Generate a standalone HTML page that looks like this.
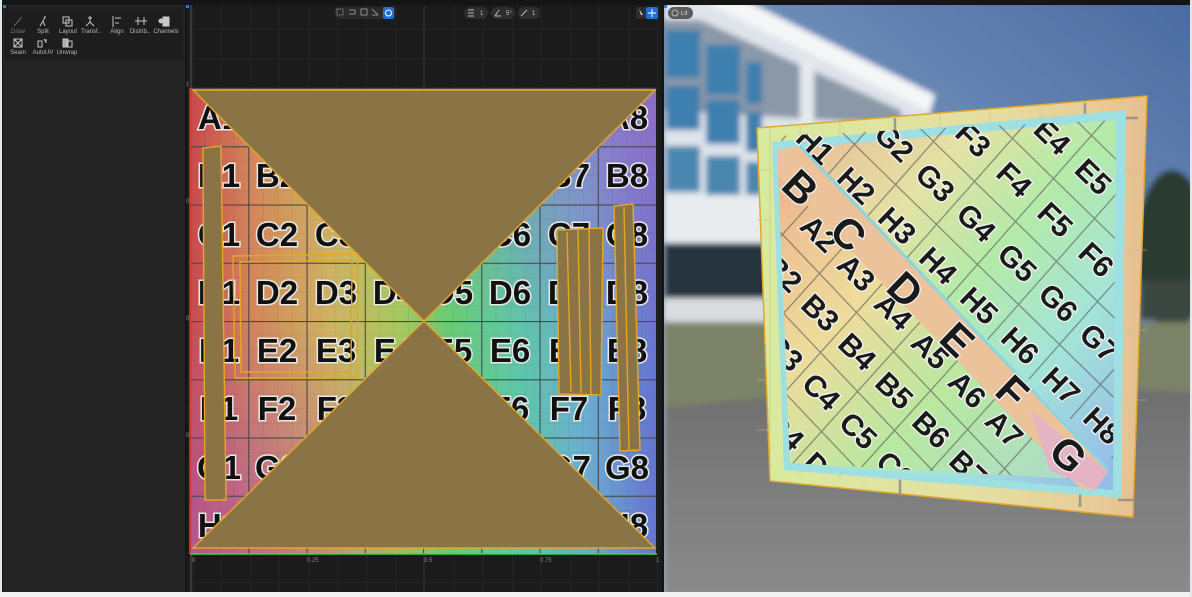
<!DOCTYPE html>
<html><head><meta charset="utf-8"><style>
html,body{margin:0;padding:0;background:#f2f2f2;width:1192px;height:597px;overflow:hidden}
svg{position:absolute;left:0;top:0;display:block}
.tb{font-family:"Liberation Sans",sans-serif;font-size:6px;fill:#b8b8b8;text-anchor:middle}
.uv{font-family:"Liberation Sans Narrow","Liberation Sans",sans-serif;font-weight:bold;font-size:33px;fill:#111;stroke:#e8e8e8;stroke-width:3;paint-order:stroke;text-anchor:middle}
.vl{font-family:"Liberation Sans Narrow","Liberation Sans",sans-serif;font-weight:bold;font-size:30px;fill:#1a1a1a;stroke:#f4f4f4;stroke-width:2.5;paint-order:stroke;text-anchor:middle}
.sl{font-family:"Liberation Sans Narrow","Liberation Sans",sans-serif;font-weight:bold;font-size:42px;fill:#1a1a1a;stroke:#f4f4f4;stroke-width:2.5;paint-order:stroke;text-anchor:middle}
.ax{font-family:"Liberation Sans",sans-serif;font-size:6px;fill:#888}
</style></head><body>
<svg width="1192" height="597" viewBox="0 0 1192 597">
<defs>
<linearGradient id="uvx" x1="0" y1="0" x2="1" y2="0">
<stop offset="0" stop-color="#c94a4c"/><stop offset=".14" stop-color="#d3895a"/><stop offset=".3" stop-color="#cfb262"/><stop offset=".45" stop-color="#a6c862"/><stop offset=".55" stop-color="#6ccb72"/><stop offset=".7" stop-color="#5fc6a8"/><stop offset=".85" stop-color="#6aaed0"/><stop offset="1" stop-color="#6674d0"/>
</linearGradient>
<radialGradient id="tr" cx="1" cy="0" r=".6"><stop offset="0" stop-color="#9c6cc4" stop-opacity=".8"/><stop offset="1" stop-color="#9c6cc4" stop-opacity="0"/></radialGradient>
<radialGradient id="bl" cx="0" cy="1" r=".55"><stop offset="0" stop-color="#b05aa8" stop-opacity=".8"/><stop offset="1" stop-color="#b05aa8" stop-opacity="0"/></radialGradient>
<pattern id="minor" x="190" y="88" width="14.5625" height="14.5625" patternUnits="userSpaceOnUse"><path d="M0 0H14.56M0 0V14.56" stroke="#000" stroke-opacity=".12" stroke-width=".8" fill="none"/></pattern>
<pattern id="major" x="190" y="88" width="58.25" height="58.25" patternUnits="userSpaceOnUse"><path d="M0 0H58.25M0 0V58.25" stroke="#4a4a4a" stroke-width="2.2" fill="none"/></pattern>
<pattern id="bggrid" x="192" y="0" width="29.1" height="29.1" patternUnits="userSpaceOnUse"><path d="M0 0H29.1M0 0V29.1" stroke="#2c2c2c" stroke-width="1" fill="none"/></pattern>
<linearGradient id="sky" x1="1" y1="0" x2="0.3" y2="1"><stop offset="0" stop-color="#4a6aa0"/><stop offset=".6" stop-color="#7e9cc4"/><stop offset="1" stop-color="#a8bcd4"/></linearGradient>
<linearGradient id="floor" x1="0" y1="0" x2="0" y2="1"><stop offset="0" stop-color="#6e6e6e"/><stop offset=".5" stop-color="#7e7e7e"/><stop offset="1" stop-color="#8a8a8a"/></linearGradient>
<filter id="blur"><feGaussianBlur stdDeviation="3"/></filter>
<clipPath id="vp"><rect x="664" y="5" width="526" height="587"/></clipPath>
<linearGradient id="frame" x1="0" y1="0" x2="1" y2="0"><stop offset="0" stop-color="#d8eaa0"/><stop offset=".6" stop-color="#e6dea0"/><stop offset=".85" stop-color="#e8cc98"/><stop offset="1" stop-color="#e6bf90"/></linearGradient>
<linearGradient id="tex" x1="0" y1="0" x2="1" y2="1"><stop offset="0" stop-color="#eab494"/><stop offset=".3" stop-color="#e4e2a4"/><stop offset=".5" stop-color="#b4eaa8"/><stop offset=".72" stop-color="#a4e4d8"/><stop offset="1" stop-color="#94b8ec"/></linearGradient>
<linearGradient id="texL" x1="0" y1="0" x2="1" y2="1"><stop offset="0" stop-color="#eeac8a"/><stop offset=".35" stop-color="#eedc9c"/><stop offset=".6" stop-color="#b8e8a0"/><stop offset="1" stop-color="#a8d8d8"/></linearGradient>
<clipPath id="rR"><polygon points="776,136 1116,120 1113,460"/></clipPath>
<clipPath id="rL"><polygon points="778,170 1075,480 1060,478 790,463"/></clipPath>
</defs>

<rect x="0" y="0" width="1192" height="592" fill="#151515"/>
<rect x="0" y="0" width="2" height="597" fill="#e6e6e6"/>
<rect x="3" y="5" width="182" height="587" fill="#242424"/>
<rect x="5" y="9" width="178" height="51" fill="#1d1d1d"/>
<rect x="3" y="5" width="3" height="3" fill="#2a7de1"/>
<g stroke="#c8c8c8" stroke-width="1" fill="none">
<path d="M14 26 L22 17" stroke="#666"/>
<path d="M40 26 l3-5 l2 5 M43 21 l2-4 M44 17 h2"/>
<rect x="63" y="17" width="6" height="6"/><rect x="66" y="20" width="6" height="6"/>
<path d="M90 16 v6 l-4 4 M90 22 l4 4 M88 18 h4"/>
<path d="M113 16 v11 M115 18 h6 M115 23 h4"/>
<path d="M135 21 h12 M138 17 v8 M144 17 v8"/>
<rect x="163" y="17" width="6" height="9" fill="#c8c8c8"/><circle cx="161" cy="21" r="2" fill="#c8c8c8"/>
<rect x="14" y="39" width="8" height="8"/><path d="M14 39 l8 8 M22 39 l-8 8"/>
<rect x="38" y="41" width="4" height="6"/><path d="M44 39 l2 3 M46 39 v4"/>
<rect x="63" y="39" width="5" height="8" fill="#aaa"/><rect x="67" y="41" width="5" height="6"/>
</g>
<text class="tb" x="18" y="33" style="fill:#777">Draw</text>
<text class="tb" x="43" y="33">Split</text>
<text class="tb" x="68" y="33">Layout</text>
<text class="tb" x="91" y="33">Transf..</text>
<text class="tb" x="117" y="33">Align</text>
<text class="tb" x="140" y="33">Distrib..</text>
<text class="tb" x="166" y="33">Channels</text>
<text class="tb" x="18" y="54">Seam</text>
<text class="tb" x="43" y="54">AutoUV</text>
<text class="tb" x="67" y="54">Unwrap</text>

<rect x="187" y="5" width="475" height="587" fill="#1b1b1b"/>
<rect x="187" y="5" width="475" height="587" fill="url(#bggrid)"/>
<rect x="186" y="5" width="3" height="3" fill="#2a7de1"/>
<line x1="424" y1="5" x2="424" y2="592" stroke="#333" />
<line x1="191" y1="5" x2="191" y2="592" stroke="#555"/>
<rect x="334" y="7" width="62" height="12" rx="6" fill="#2a2a2a"/>
<g fill="none" stroke="#aaa" stroke-width=".8"><rect x="337" y="9" width="6" height="6" stroke-dasharray="1.5 1"/><path d="M349 10 h6 v4 h-6"/><rect x="361" y="9" width="6" height="6"/><path d="M372 9 l6 6 M372 15 h6"/></g>
<rect x="383" y="7" width="11" height="12" rx="2" fill="#1f6fd6"/><circle cx="388.5" cy="13" r="3" fill="none" stroke="#fff" stroke-width="1"/>
<rect x="464" y="7" width="24" height="12" rx="6" fill="#2e2e2e"/><path d="M468 10h6M468 13h6M468 16h6" stroke="#bbb"/><text class="ax" x="480" y="15" style="fill:#ccc">1</text>
<rect x="491" y="7" width="24" height="12" rx="6" fill="#2e2e2e"/><path d="M495 16 l4-6 M495 16 h6" stroke="#bbb" fill="none"/><text class="ax" x="506" y="15" style="fill:#ccc">5°</text>
<rect x="518" y="7" width="22" height="12" rx="6" fill="#2e2e2e"/><path d="M521 16 l6-6" stroke="#bbb"/><text class="ax" x="532" y="15" style="fill:#ccc">1</text>
<rect x="636" y="7" width="10" height="12" rx="2" fill="#2e2e2e"/><path d="M639 9 l4 6 l-2 0z" fill="#ddd"/>
<rect x="646" y="7" width="12" height="12" rx="2" fill="#1f6fd6"/><path d="M652 9v8M648 13h8" stroke="#fff"/>

<rect x="190" y="88" width="466" height="466" fill="url(#uvx)"/>
<rect x="190" y="88" width="466" height="466" fill="url(#tr)"/>
<rect x="190" y="88" width="466" height="466" fill="url(#bl)"/>
<rect x="190" y="88" width="466" height="466" fill="url(#minor)"/>
<rect x="190" y="88" width="466" height="466" fill="url(#major)"/>
<g class="uv">
<text x="219" y="129">A1</text><text x="627" y="129">A8</text>
<text x="219" y="187">B1</text><text x="277" y="187">B2</text><text x="569" y="187">B7</text><text x="627" y="187">B8</text>
<text x="219" y="246">C1</text><text x="277" y="246">C2</text><text x="336" y="246">C3</text><text x="510" y="246">C6</text><text x="569" y="246">C7</text><text x="627" y="246">C8</text>
<text x="219" y="304">D1</text><text x="277" y="304">D2</text><text x="336" y="304">D3</text><text x="394" y="304">D4</text><text x="452" y="304">D5</text><text x="510" y="304">D6</text><text x="569" y="304">D7</text><text x="627" y="304">D8</text>
<text x="219" y="362">E1</text><text x="277" y="362">E2</text><text x="336" y="362">E3</text><text x="394" y="362">E4</text><text x="452" y="362">E5</text><text x="510" y="362">E6</text><text x="569" y="362">E7</text><text x="627" y="362">E8</text>
<text x="219" y="420">F1</text><text x="277" y="420">F2</text><text x="336" y="420">F3</text><text x="510" y="420">F6</text><text x="569" y="420">F7</text><text x="627" y="420">F8</text>
<text x="219" y="479">G1</text><text x="277" y="479">G2</text><text x="569" y="479">G7</text><text x="627" y="479">G8</text>
<text x="219" y="537">H1</text><text x="627" y="537">H8</text>
</g>
<g fill="#8a7446" stroke="#e6a622" stroke-width="1.4">
<polygon points="193,90 655,90 424,321"/>
<polygon points="424,321 655,548 193,548"/>
<polygon points="203,148 221,146 226,500 205,500"/>
<polygon points="614,206 633,204 640,450 620,451"/>
<polygon points="557,230 603,228 601,395 559,394"/>
</g>
<g fill="none" stroke="#e6a622" stroke-width="1.4">
<polygon points="233,256 358,254 357,378 235,378"/><polygon points="240,262 352,260 351,372 241,372"/>
<path d="M567 232 l4 160 M578 230 l3 163 M589 229 l2 165 M624 207 l5 243"/>
</g>
<line x1="190" y1="88" x2="190" y2="554" stroke="#ff3030" stroke-width="1.5"/>
<line x1="190" y1="554" x2="657" y2="554" stroke="#33e033" stroke-width="1.5"/>
<text class="ax" x="192" y="562">0</text><text class="ax" x="307" y="562">0.25</text><text class="ax" x="424" y="562">0.5</text><text class="ax" x="540" y="562">0.75</text><text class="ax" x="656" y="562">1</text>
<text class="ax" x="186" y="86">1</text><text class="ax" x="186" y="203">0</text><text class="ax" x="186" y="320">0</text><text class="ax" x="186" y="437">0</text>

<g clip-path="url(#vp)">
<g filter="url(#blur)">
<rect x="660" y="0" width="540" height="600" fill="url(#sky)"/>
<polygon points="664,0 700,0 930,100 930,330 664,330" fill="#dfe4ea"/>
<polygon points="664,20 700,20 900,110 905,125 664,110" fill="#8a98a8"/>
<polygon points="700,0 745,0 935,95 930,112" fill="#f4f6f8"/>
<rect x="666" y="30" width="34" height="48" fill="#3d7fae"/><rect x="706" y="45" width="34" height="50" fill="#3d7fae"/><rect x="746" y="62" width="16" height="42" fill="#3d7fae"/>
<rect x="666" y="86" width="34" height="44" fill="#3d7fae"/><rect x="706" y="100" width="34" height="44" fill="#3d7fae"/><rect x="746" y="112" width="16" height="40" fill="#3d7fae"/>
<rect x="666" y="146" width="34" height="46" fill="#4a86b0"/><rect x="706" y="156" width="34" height="42" fill="#4a86b0"/><rect x="746" y="162" width="16" height="40" fill="#4a86b0"/>
<rect x="800" y="60" width="14" height="240" fill="#e6eaee"/>
<rect x="664" y="195" width="266" height="48" fill="#e8ecef"/>
<rect x="664" y="243" width="266" height="55" fill="#28363c"/>
<rect x="664" y="298" width="266" height="30" fill="#d8dcde"/>
<ellipse cx="1172" cy="250" rx="36" ry="80" fill="#2c3a30"/>
<rect x="1140" y="280" width="52" height="40" fill="#3a4640"/>
<rect x="664" y="322" width="530" height="90" fill="#7d8368"/>
<path d="M664 408 Q927 378 1192 392 V600 H664Z" fill="url(#floor)"/>
</g>
<polygon points="757,128 1147,96 1133,517 770,481" fill="url(#frame)" stroke="#e2a62a" stroke-width="1.5"/>
<g stroke="#8a8a8a" stroke-width="2.5" opacity=".8"><path d="M895 118 v16 M1085 103 v14 M900 479 v18 M1080 485 v22 M1120 118 h18 M1118 500 h16"/></g>
<g stroke="#c0c080" stroke-width=".8" fill="none" opacity=".7"><path d="M770 126 v350 M800 124 v352 M840 120 v360 M940 112 v370 M990 108 v380 M1040 104 v390 M757 170 h15 M757 220 h15 M757 300 h15 M757 380 h15 M757 430 h15 M1120 170 h27 M1120 250 h27 M1120 330 h27 M1120 400 h27"/></g>
<polygon points="772,142 1126,110 1121,498 784,470" fill="#9ee0e2"/>
<polygon points="779,150 1116,120 1113,490 790,463" fill="url(#tex)"/>
<g clip-path="url(#rL)">
<polygon points="770,140 1120,140 1120,500 770,500" fill="url(#texL)"/>
<g transform="matrix(37,39,-36,40,745,156)" fill="none">
<path stroke="#555" stroke-opacity=".6" stroke-width="1.3" vector-effect="non-scaling-stroke" d="M-1.5 -1 V9 M-.5 -1 V9 M.5 -1V9 M1.5 -1V9 M2.5 -1V9 M3.5 -1V9 M4.5 -1V9 M5.5 -1V9 M6.5 -1V9 M7.5 -1V9 M8.5 -1V9 M-2 -.5H10 M-2 .5H10 M-2 1.5H10 M-2 2.5H10 M-2 3.5H10 M-2 4.5H10"/>
</g>
<g class="vl">
<text transform="translate(819,234) rotate(44)" y="10">A2</text><text transform="translate(856,273) rotate(44)" y="10">A3</text><text transform="translate(893,312) rotate(44)" y="10">A4</text><text transform="translate(930,351) rotate(44)" y="10">A5</text><text transform="translate(967,390) rotate(44)" y="10">A6</text><text transform="translate(1004,429) rotate(44)" y="10">A7</text>
<text transform="translate(783,274) rotate(44)" y="10">B2</text><text transform="translate(820,313) rotate(44)" y="10">B3</text><text transform="translate(857,352) rotate(44)" y="10">B4</text><text transform="translate(894,391) rotate(44)" y="10">B5</text><text transform="translate(931,430) rotate(44)" y="10">B6</text><text transform="translate(968,469) rotate(44)" y="10">B7</text>
<text transform="translate(784,353) rotate(44)" y="10">C3</text><text transform="translate(821,392) rotate(44)" y="10">C4</text><text transform="translate(858,431) rotate(44)" y="10">C5</text><text transform="translate(895,470) rotate(44)" y="10">C6</text>
<text transform="translate(785,432) rotate(44)" y="10">D4</text><text transform="translate(822,471) rotate(44)" y="10">D5</text>
</g>
</g>
<g clip-path="url(#rR)">
<g transform="matrix(41,40,-38,43,1040,-195)" fill="none">
<path stroke="#555" stroke-opacity=".6" stroke-width="1.3" vector-effect="non-scaling-stroke" d="M.5 2V10 M1.5 2V10 M2.5 2V10 M3.5 2V10 M4.5 2V10 M5.5 2V10 M6.5 2V10 M7.5 2V10 M8.5 2V10 M0 3.5H10 M0 4.5H10 M0 5.5H10 M0 6.5H10 M0 7.5H10"/>
</g>
<g class="vl">
<text transform="translate(1052,137) rotate(44)" y="10">E4</text><text transform="translate(1093,177) rotate(44)" y="10">E5</text>
<text transform="translate(973,140) rotate(44)" y="10">F3</text><text transform="translate(1014,180) rotate(44)" y="10">F4</text><text transform="translate(1055,220) rotate(44)" y="10">F5</text><text transform="translate(1096,260) rotate(44)" y="10">F6</text>
<text transform="translate(894,143) rotate(44)" y="10">G2</text><text transform="translate(935,183) rotate(44)" y="10">G3</text><text transform="translate(976,223) rotate(44)" y="10">G4</text><text transform="translate(1017,263) rotate(44)" y="10">G5</text><text transform="translate(1058,303) rotate(44)" y="10">G6</text><text transform="translate(1099,343) rotate(44)" y="10">G7</text>
<text transform="translate(815,146) rotate(44)" y="10">H1</text><text transform="translate(856,186) rotate(44)" y="10">H2</text><text transform="translate(897,226) rotate(44)" y="10">H3</text><text transform="translate(938,266) rotate(44)" y="10">H4</text><text transform="translate(979,306) rotate(44)" y="10">H5</text><text transform="translate(1020,346) rotate(44)" y="10">H6</text><text transform="translate(1061,386) rotate(44)" y="10">H7</text><text transform="translate(1102,426) rotate(44)" y="10">H8</text>
</g>
</g>
<polygon points="778,150 800,146 1108,472 1095,490 1080,488 778,175" fill="#ecc29a"/>
<polygon points="1030,410 1108,472 1095,490 1050,470" fill="#e4b4c4"/>
<line x1="800" y1="146" x2="1108" y2="470" stroke="#8ad6e0" stroke-width="3"/>
<g class="sl">
<text transform="translate(800,188) rotate(44)" y="14">B</text><text transform="translate(848,234) rotate(44)" y="14">C</text><text transform="translate(905,290) rotate(44)" y="14">D</text><text transform="translate(957,340) rotate(44)" y="14">E</text><text transform="translate(1012,392) rotate(44)" y="14">F</text><text transform="translate(1068,455) rotate(44)" y="14">G</text>
</g>
<rect x="668" y="7" width="25" height="12" rx="6" fill="#3a3a3a" fill-opacity=".8"/>
<circle cx="675" cy="13" r="3" fill="none" stroke="#bbb" stroke-width="1"/>
<text class="ax" x="681" y="15" style="fill:#ddd">Lit</text>
</g>
<rect x="664" y="5" width="3" height="3" fill="#2a7de1"/>
<rect x="0" y="592" width="1192" height="5" fill="#f2f2f2"/>
<rect x="1190" y="0" width="2" height="597" fill="#e6e6e6"/>
</svg>
</body></html>
